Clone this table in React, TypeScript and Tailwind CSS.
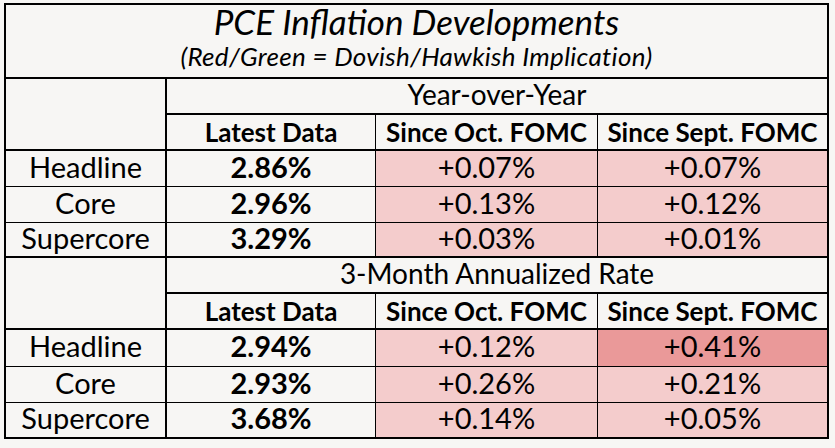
import React from "react";

const font = { fontFamily: "Lato, 'Open Sans', sans-serif" };

type Row = { label: string; latest: string; oct: string; sept: string; septDark?: boolean; h: string };

function DataRow({ r, last }: { r: Row; last: "thin" | "thick" | "none" }) {
  const b = last === "thin" ? "border-b" : last === "thick" ? "border-b-2" : "";
  return (
    <div className={`flex ${r.h} ${b} border-black text-[29px] leading-none`}>
      <div className="w-[161px] border-r-2 border-black flex items-center justify-center pb-[5px]">{r.label}</div>
      <div className="w-[209px] border-r border-black flex items-center justify-center font-bold pb-[5px]">{r.latest}</div>
      <div className="w-[222px] border-r border-black flex items-center justify-center bg-[#f4cccc] pb-[5px]">{r.oct}</div>
      <div className={`flex-1 flex items-center justify-center pb-[5px] ${r.septDark ? "bg-[#ea9999]" : "bg-[#f4cccc]"}`}>{r.sept}</div>
    </div>
  );
}

function Section({ title }: { title: string }) {
  return (
    <div className="flex border-b-2 border-black h-[72px]">
      <div className="w-[161px] border-r-2 border-black" />
      <div className="flex-1 flex flex-col">
        <div className="h-[36px] border-b-2 border-black flex items-center justify-center text-[28px] leading-none pb-[4px]">{title}</div>
        <div className="flex-1 flex font-bold text-[26px] leading-none">
          <div className="w-[209px] border-r border-black flex items-center justify-center">Latest Data</div>
          <div className="w-[222px] border-r border-black flex items-center justify-center">Since Oct. FOMC</div>
          <div className="flex-1 flex items-center justify-center">Since Sept. FOMC</div>
        </div>
      </div>
    </div>
  );
}

export default function App() {
  const yoy: Row[] = [
    { label: "Headline", latest: "2.86%", oct: "+0.07%", sept: "+0.07%", h: "h-[36px]" },
    { label: "Core", latest: "2.96%", oct: "+0.13%", sept: "+0.12%", h: "h-[36px]" },
    { label: "Supercore", latest: "3.29%", oct: "+0.03%", sept: "+0.01%", h: "h-[35px]" },
  ];
  const m3: Row[] = [
    { label: "Headline", latest: "2.94%", oct: "+0.12%", sept: "+0.41%", septDark: true, h: "h-[37px]" },
    { label: "Core", latest: "2.93%", oct: "+0.26%", sept: "+0.21%", h: "h-[36px]" },
    { label: "Supercore", latest: "3.68%", oct: "+0.14%", sept: "+0.05%", h: "h-[34px]" },
  ];
  return (
    <div className="w-[835px] h-[448px] bg-[#f7f6f4] pt-[3px] pl-[4px] text-black" style={font}>
      <div className="w-[825px] border-2 border-black flex flex-col">
        <div className="h-[74px] border-b-2 border-black flex flex-col items-center justify-start italic">
          <div className="text-[35px] leading-[32px]">PCE Inflation Developments</div>
          <div className="text-[26px] leading-[30px] mt-[4px] tracking-[0.3px]">(Red/Green = Dovish/Hawkish Implication)</div>
        </div>
        <Section title="Year-over-Year" />
        <DataRow r={yoy[0]} last="thin" />
        <DataRow r={yoy[1]} last="thin" />
        <DataRow r={yoy[2]} last="thick" />
        <Section title="3-Month Annualized Rate" />
        <DataRow r={m3[0]} last="thin" />
        <DataRow r={m3[1]} last="thin" />
        <DataRow r={m3[2]} last="none" />
      </div>
    </div>
  );
}
